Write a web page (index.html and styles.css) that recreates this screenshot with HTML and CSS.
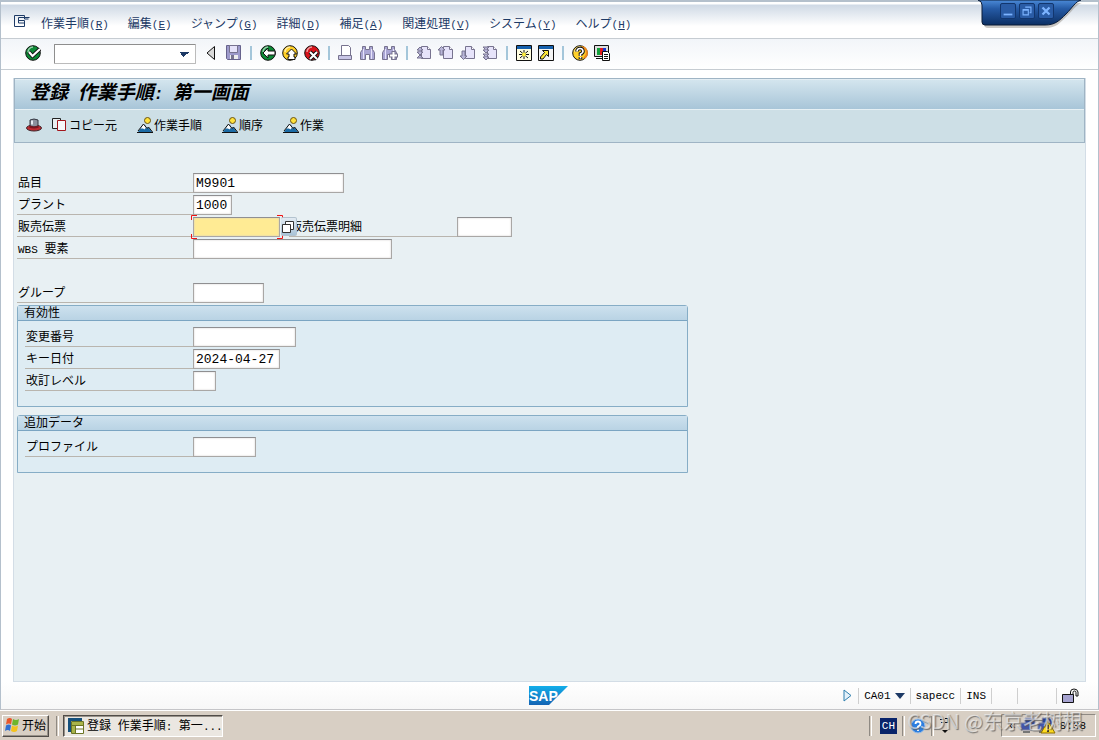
FILE: index.html
```html
<!DOCTYPE html>
<html lang="ja">
<head>
    <meta charset="UTF-8">
    <meta name="viewport" content="width=device-width, initial-scale=1.0">
    <title>登録 作業手順: 第一画面</title>
    <link rel="stylesheet" href="styles.css">
</head>
<body>
    <!-- Shared icon shapes -->
    <svg class="sprite" xmlns="http://www.w3.org/2000/svg">
        <symbol id="ball" viewBox="0 0 16 16">
            <circle cx="8" cy="8" r="7.3" fill="currentColor" stroke="#111" stroke-width="1"/>
            <path d="M3 7a5 5 0 0 1 5-5" fill="none" stroke="#fff" stroke-opacity=".6" stroke-width="1.4"/>
        </symbol>
        <symbol id="mountain" viewBox="0 0 16 16">
            <path d="M1 15 6 8h2l2 3 1-1 4 5z" fill="#1b6ba5"/>
            <path d="M3.500 11.500 6 8h1.500l2.500 4-1.500-1-1 1.500-1.500-1z" fill="#fff"/>
            <path d="M0 15.500h16M1 14l5.500-7L10 11.500l1.500-1.500 4 5" fill="none" stroke="#111"/>
            <circle cx="10.500" cy="3.500" r="3" fill="#ffe23c" stroke="#6b5310"/>
        </symbol>
        <symbol id="page" viewBox="0 0 16 16">
            <path d="M5.500 1.500h6l3 3v9h-9z" fill="#e6e3fa" stroke="#77738f"/>
            <path d="M11.500 1.500v3h3" fill="#fff" stroke="#77738f"/>
        </symbol>
        <symbol id="glasses" viewBox="0 0 16 16">
            <path d="M2.500 1.500h3v3h4v-3h3v3l2 3v7h-5v-5h-4v5h-5v-7l2-3z" fill="#aaa6d4" stroke="#77738f"/>
            <path d="M3.500 4v10M11.500 4v10" stroke="#e6e3fa"/>
        </symbol>
    </svg>

    <div class="app">
        <div class="window-controls">
            <svg class="window-shape" viewBox="0 0 104 30">
                <defs>
                    <linearGradient id="tab" x1="0" y1="0" x2="0" y2="1">
                        <stop offset="0" stop-color="#4b8ad8"/>
                        <stop offset=".35" stop-color="#255aa5"/>
                        <stop offset="1" stop-color="#0c2f63"/>
                    </linearGradient>
                </defs>
                <path d="M3 2q3 1 3 5v17q0 4 4 4h58c10 0 14-5 21-12s10-12 15-13z" fill="#8b857c" opacity=".45"/>
                <path d="M0 0q4 1 4 5v17q0 3 3 3h60c10 0 14-4 21-11S97 2 103 0z" fill="url(#tab)" stroke="#0b1c38"/>
            </svg>
            <button class="win-btn" aria-label="最小化"><svg viewBox="0 0 16 16"><path d="M3 12h10" stroke="#7db4ff" stroke-width="2"/></svg></button>
            <button class="win-btn" aria-label="元に戻す"><svg viewBox="0 0 16 16"><path d="M6 3.500h6.500V10H11M3.500 7h6v5.500h-6zM3 6.500h7" fill="none" stroke="#7db4ff" stroke-width="1.300"/></svg></button>
            <button class="win-btn" aria-label="閉じる"><svg viewBox="0 0 16 16"><path d="m4 4 8 8M12 4l-8 8" stroke="#7db4ff" stroke-width="2.600"/></svg></button>
        </div>

        <nav class="menubar">
            <button class="menu-icon" aria-label="メニュー">
                <svg width="16" height="14" viewBox="0 0 16 14"><path d="M10.500 3.500v-2h-10v11h10V9M15.500 3.500h-11V9h6V6.500h-6M10.500 3.500V5h4" fill="none" stroke="#1d3a66"/></svg>
            </button>
            <a href="#">作業手順<span class="en">(<u>R</u>)</span></a>
            <a href="#">編集<span class="en">(<u>E</u>)</span></a>
            <a href="#">ジャンプ<span class="en">(<u>G</u>)</span></a>
            <a href="#">詳細<span class="en">(<u>D</u>)</span></a>
            <a href="#">補足<span class="en">(<u>A</u>)</span></a>
            <a href="#">関連処理<span class="en">(<u>V</u>)</span></a>
            <a href="#">システム<span class="en">(<u>Y</u>)</span></a>
            <a href="#">ヘルプ<span class="en">(<u>H</u>)</span></a>
        </nav>

        <div class="toolbar">
            <button class="icon-btn" aria-label="Enter">
                <svg class="green" viewBox="0 0 16 16"><use href="#ball"/><path d="m4 7 3.500 4L15 4" fill="none" stroke="#111" stroke-width="4"/><path d="m4 7 3.500 4L15 4" fill="none" stroke="#fff" stroke-width="2.200"/></svg>
            </button>
            <select class="command" aria-label="コマンド"><option></option></select>
            <button class="icon-btn" aria-label="コマンド項目を閉じる">
                <svg viewBox="0 0 16 16"><path d="M10.500 1.500v13L3 8z" fill="#d9d9d9" stroke="#111"/></svg>
            </button>
            <button class="icon-btn" aria-label="保存">
                <svg viewBox="0 0 16 16"><path d="M.500.500h14v14h-13l-1-1z" fill="#9d9acb" stroke="#66628c"/><path d="M3.500.500h8v7h-8z" fill="#e6e3fa" stroke="#77738f"/><path d="M4 10h8v4H4z" fill="#eee"/><path d="M5 10h3v4H5z" fill="#77738f"/></svg>
            </button>
            <span class="sep"></span>
            <button class="icon-btn" aria-label="戻る">
                <svg class="green" viewBox="0 0 16 16"><use href="#ball"/><path d="m3 8 5-5v3h7v4H8v3z" fill="#fff" stroke="#111"/></svg>
            </button>
            <button class="icon-btn" aria-label="終了">
                <svg class="yellow" viewBox="0 0 16 16"><use href="#ball"/><path d="m9.500 4 5 5H12v3h1v2.500H6V12h1V9H4.500z" fill="#fff" stroke="#111"/></svg>
            </button>
            <button class="icon-btn" aria-label="キャンセル">
                <svg class="red" viewBox="0 0 16 16"><use href="#ball"/><path d="m6 7 7 7M13 7l-7 7" stroke="#111" stroke-width="4"/><path d="m6 7 7 7M13 7l-7 7" stroke="#fff" stroke-width="2"/></svg>
            </button>
            <span class="sep"></span>
            <button class="icon-btn" aria-label="印刷" disabled>
                <svg viewBox="0 0 16 16"><path d="M3.500.500h7l2 2v8h-9z" fill="#fff" stroke="#77738f"/><path d="M.500 10.500h13v4H.500z" fill="#c9c6e6" stroke="#77738f"/></svg>
            </button>
            <button class="icon-btn" aria-label="検索" disabled>
                <svg viewBox="0 0 16 16"><use href="#glasses"/></svg>
            </button>
            <button class="icon-btn" aria-label="次を検索" disabled>
                <svg viewBox="0 0 16 16"><use href="#glasses"/><path d="M11.500 6v9M7 10.500h9" stroke="#77738f" stroke-width="4"/><path d="M11.500 7v7M8 10.500h7" stroke="#fff" stroke-width="2"/></svg>
            </button>
            <span class="sep"></span>
            <button class="icon-btn" aria-label="先頭ページ" disabled>
                <svg viewBox="0 0 16 16"><use href="#page"/><path d="m1 5 3-3 3 3H5v2h2l-3 3 3 3H1l3-3-3-3h2V5z" fill="#b8b5d8" stroke="#77738f"/></svg>
            </button>
            <button class="icon-btn" aria-label="前ページ" disabled>
                <svg viewBox="0 0 16 16"><use href="#page"/><path d="m0 5 3.500-3.500L7 5H5v5H2V5z" fill="#b8b5d8" stroke="#77738f"/></svg>
            </button>
            <button class="icon-btn" aria-label="次ページ" disabled>
                <svg viewBox="0 0 16 16"><use href="#page"/><path d="m0 11 3.500 3.500L7 11H5V6H2v5z" fill="#b8b5d8" stroke="#77738f"/></svg>
            </button>
            <button class="icon-btn" aria-label="最終ページ" disabled>
                <svg viewBox="0 0 16 16"><use href="#page"/><path d="M1 2h6L5 4v1h2L4 8 1 5h2V4zM1 9h6l-2 2v1h2l-3 3-3-3h2v-1z" fill="#b8b5d8" stroke="#77738f"/></svg>
            </button>
            <span class="sep"></span>
            <button class="icon-btn" aria-label="新規セッション">
                <svg viewBox="0 0 16 16"><path d="M.500.500h15v15H.500z" fill="#fffde0" stroke="#111"/><path d="M1 1h14v3H1z" fill="#1560ad"/><path d="M8 5v9M3 9.500h10M4 6l8 7M12 6l-8 7" stroke="#111"/><circle cx="8" cy="9.500" r="2" fill="#ffef3e"/></svg>
            </button>
            <button class="icon-btn" aria-label="ショートカット">
                <svg viewBox="0 0 16 16"><path d="M.500.500h15v15H.500z" fill="#f4f4f4" stroke="#111"/><path d="M1 1h14v3H1z" fill="#1560ad"/><path d="M4.500 5.500h6v6L8.500 9.500 5 14H2.500v-2L6.500 7.500z" fill="#ffe93a" stroke="#111"/></svg>
            </button>
            <span class="sep"></span>
            <button class="icon-btn" aria-label="ヘルプ">
                <svg class="yellow" viewBox="0 0 16 16"><use href="#ball"/><path d="M10 2a6 6 0 0 1 2 11" fill="none" stroke="#f08a1c" stroke-width="2"/><path d="M5 6.500q0-3 3-3t3 3Q11 8 8.500 9v2M8.500 12v2" fill="none" stroke="#111" stroke-width="3.600"/><path d="M5 6.500q0-3 3-3t3 3Q11 8 8.500 9v2M8.500 12v1.500" fill="none" stroke="#fff" stroke-width="1.700"/></svg>
            </button>
            <button class="icon-btn" aria-label="レイアウト調整">
                <svg viewBox="0 0 16 16"><path d="M.500.500h14v11H.500zM2 13.500h7" fill="#ddd" stroke="#111"/><path d="M3 3h3v7H3z" fill="#12a03c"/><path d="M6 3h3v7H6z" fill="#e3171c"/><path d="M9 3h3v7H9z" fill="#1635d0"/><path d="M8.500 6.500h5l2 2v7h-7z" fill="#fff" stroke="#111"/><path d="M10 9.500h4M10 11.500h4M10 13.500h4" stroke="#111"/></svg>
            </button>
        </div>

        <main class="content">
            <header class="screen-header">
                <h1>登録<span class="en"> </span>作業手順<span class="en">: </span>第一画面</h1>
                <div class="app-toolbar">
                    <button class="hat" aria-label="見出し">
                        <svg viewBox="0 0 16 16"><ellipse cx="8" cy="11" rx="7.500" ry="3" fill="#bf2b32" stroke="#40262c"/><path d="M4 9V3q4-2 8 0v6q-4 2-8 0z" fill="#8c919e" stroke="#343741"/><path d="M6 3.500v4" stroke="#e8ebf2" stroke-width="2"/><path d="M3.500 9.500q4.500 2 9 0" fill="none" stroke="#7c1620" stroke-width="2"/></svg>
                    </button>
                    <button>
                        <svg viewBox="0 0 16 16"><path d="M.500 1.500h8v10h-8z" fill="#e9eef0" stroke="#222"/><path d="M5.500 3.500h8v10h-8z" fill="#f6f7fa" stroke="#a3161c"/></svg>
                        <span>コピー元</span>
                    </button>
                    <button><svg viewBox="0 0 16 16"><use href="#mountain"/></svg><span>作業手順</span></button>
                    <button><svg viewBox="0 0 16 16"><use href="#mountain"/></svg><span>順序</span></button>
                    <button><svg viewBox="0 0 16 16"><use href="#mountain"/></svg><span>作業</span></button>
                </div>
            </header>

            <form class="form">
                <div class="row">
                    <label for="material">品目</label>
                    <input class="w-material" type="text" id="material" value="M9901">
                </div>
                <div class="row">
                    <label for="plant">プラント</label>
                    <input class="w-plant" type="text" id="plant" value="1000">
                </div>
                <div class="row">
                    <label for="order">販売伝票</label>
                    <div class="field-focus">
                        <input class="w-date" type="text" id="order">
                        <svg class="corners" viewBox="0 0 92 24"><path d="M.500 5V.500H6M86 .500h5.500V5M.500 19v4.500H6M86 23.500h5.500V19" fill="none" stroke="#f01414"/></svg>
                        <button type="button" class="match-btn" aria-label="検索ヘルプ">
                            <svg viewBox="0 0 12 12"><path d="M3.500 3.500v-3h8v8h-3" fill="#fff" stroke="#333"/><path d="M.500 3.500h8v8h-8z" fill="#fff" stroke="#333"/></svg>
                        </button>
                    </div>
                    <label for="item" class="second">販売伝票明細</label>
                    <input class="w-item" type="text" id="item">
                </div>
                <div class="row">
                    <label for="wbs"><span class="en">WBS </span>要素</label>
                    <input class="w-wbs" type="text" id="wbs">
                </div>
                <div class="row spaced">
                    <label for="group">グループ</label>
                    <input class="w-group" type="text" id="group">
                </div>

                <section class="box">
                    <h2>有効性</h2>
                    <div class="box-body">
                        <div class="row">
                            <label for="change">変更番号</label>
                            <input class="w-change" type="text" id="change">
                        </div>
                        <div class="row">
                            <label for="keydate">キー日付</label>
                            <input class="w-date" type="text" id="keydate" value="2024-04-27">
                        </div>
                        <div class="row">
                            <label for="rev">改訂レベル</label>
                            <input class="w-rev" type="text" id="rev">
                        </div>
                    </div>
                </section>

                <section class="box">
                    <h2>追加データ</h2>
                    <div class="box-body">
                        <div class="row">
                            <label for="profile">プロファイル</label>
                            <input class="w-profile" type="text" id="profile">
                        </div>
                    </div>
                </section>
            </form>
        </main>

        <footer class="statusbar">
            <div class="sap-logo">
                <svg width="40" height="20" viewBox="0 0 40 20">
                    <defs>
                        <linearGradient id="sap" x1="0" y1="0" x2="0" y2="1">
                            <stop offset="0" stop-color="#12aeea"/>
                            <stop offset="1" stop-color="#1464b4"/>
                        </linearGradient>
                    </defs>
                    <path d="M0 0h39L20 19H0z" fill="url(#sap)"/>
                    <text class="sap-text" x="0" y="15">SAP</text>
                </svg>
            </div>
            <div class="status-info en">
                <button class="status-arrow" aria-label="詳細表示"><svg width="9" height="13" viewBox="0 0 9 13"><path d="M1 1v11l7-5.500z" fill="#e4f1fa" stroke="#2f7fae"/></svg></button>
                <button class="status-cell">CA01<svg width="10" height="6" viewBox="0 0 10 6"><path d="M0 0h10L5 6z" fill="#1d3a66"/></svg></button>
                <span class="status-cell">sapecc</span>
                <span class="status-cell">INS</span>
                <span class="status-cell empty-s"></span>
                <span class="status-cell empty-l"></span>
                <span class="status-cell lock"><svg width="17" height="16" viewBox="0 0 17 16"><path d="M8.500 7V4q0-3 3.500-3t4 3v4h-2V4.500q0-1.500-1.500-1.500T11 4.500V7" fill="#fff" stroke="#111"/><path d="M.500 6.500h11v8H.500z" fill="#a5a2cf" stroke="#111"/></svg></span>
            </div>
        </footer>
    </div>

    <div class="taskbar">
        <button class="start">
            <svg width="16" height="16" viewBox="0 0 16 16"><path d="M3 2q3-2 5 0L7 7.500q-2-2-5 0z" fill="#e8562a"/><path d="M9 2q3 2 6 0l-1 5.500q-3 2-6 0z" fill="#6fb52c"/><path d="M2 8.500q3-2 5 0L6 14q-2-2-5 0z" fill="#2f6fd0"/><path d="M8 8.500q3 2 6 0L13 14q-3 2-6 0z" fill="#f5c21c"/></svg>
            <span lang="zh">开始</span>
        </button>
        <span class="grip"></span>
        <button class="task">
            <svg width="16" height="16" viewBox="0 0 16 16"><path d="M0 0h14v3H3v11H0z" fill="#15507c"/><path d="M3.500 3.500h12v12h-12z" fill="#fff" stroke="#6b7424"/><path d="M4 4h11v3H4zM4 7h3v8H4z" fill="#a9b44a"/><path d="M7.500 7v8M4 7.500h11M8 11h7" stroke="#6b7424"/></svg>
            <span>登録<span class="en"> </span>作業手順<span class="en">: </span>第一<span class="en">...</span></span>
        </button>

        <div class="tray">
            <span class="grip"></span>
            <span class="lang en">CH</span>
            <span class="grip"></span>
            <svg width="16" height="16" viewBox="0 0 16 16"><circle cx="8" cy="8" r="7" fill="#2c7fe0" stroke="#9dbfe6"/><path d="M5.500 6q0-2.500 2.500-2.500T10.500 6Q10.500 7.500 8 8.500V10M8 11.500v1.500" fill="none" stroke="#fff" stroke-width="1.800"/></svg>
            <span class="grip"></span>
            <svg class="options" width="9" height="18" viewBox="0 0 9 18"><path d="M0 2.500h4M5 1.500h3v4H5M1 5.500h3" fill="none" stroke="#111"/><path d="M2 13h6l-3 3z" fill="#111"/></svg>
            <div class="notify">
                <span class="en">«</span>
                <svg width="36" height="17" viewBox="0 0 36 17"><path d="M5 1h10v7H5zM22 1h10v7H22z" fill="#2b3f92" stroke="#9a9fb8"/><path d="M1 6h10v7H1zM18 6h10v7H18z" fill="#4355a8" stroke="#8589a5"/><path d="M3 15h7M19 15h6" stroke="#777" stroke-width="2"/><path d="m28 4 7 12H21z" fill="#ffdc1e" stroke="#8f7000"/><path d="M28 8v4M28 13v2" stroke="#111" stroke-width="1.600"/></svg>
                <time class="en">8:38</time>
            </div>
            <span class="watermark" lang="zh">CSDN @东京老树根</span>
        </div>
    </div>
</body>
</html>
```
FILE: styles.css
```css
* {
    margin: 0;
    padding: 0;
    box-sizing: border-box;
}

body {
    display: flex;
    flex-direction: column;
    min-height: 100vh;
    background-color: #d8cfc4;
    color: #000;
    font-family: 'Noto Sans CJK JP', sans-serif;
    font-size: 12px;
    line-height: 16px;
}

button,
select,
input {
    font: inherit;
    color: inherit;
    border: none;
    background: none;
}

a {
    color: inherit;
    text-decoration: none;
}

svg {
    display: block;
    flex: none;
}

[lang="zh"] {
    font-family: 'Noto Sans CJK SC', sans-serif;
}

.sprite {
    position: absolute;
    width: 0;
    height: 0;
}

.en {
    font-family: 'Liberation Mono', monospace;
    font-size: 11px;
    white-space: pre;
}

/* Main window */
.app {
    position: relative;
    flex: 1;
    display: flex;
    flex-direction: column;
    background-color: #fff;
    border: 1px solid #b4c0cc;
    border-top-width: 2px;
    border-bottom-color: #c5c5c8;
}

.window-controls {
    position: absolute;
    top: -2px;
    right: 16px;
    width: 104px;
    height: 30px;
    display: flex;
    gap: 3px;
    padding: 3px 0 0 22px;
}

.window-shape {
    position: absolute;
    top: 0;
    left: 0;
    width: 104px;
    height: 30px;
}

.win-btn {
    position: relative;
    width: 16px;
    height: 16px;
    border: 1px solid #12366e;
    border-radius: 2px;
    background-color: #2a5ca6;
}

.menubar {
    display: flex;
    align-items: center;
    gap: 19px;
    height: 37px;
    padding: 8px 13px 0;
    color: #1d3a66;
    background: linear-gradient(#fff 0, #fff 2px, #cfd9e5 3px, #fff 24px);
    border-bottom: 1px solid #c6ccd2;
}

.menubar a {
    white-space: nowrap;
}

.menu-icon {
    width: 16px;
    margin: -6px -8px 0 0;
}

.toolbar {
    display: flex;
    align-items: center;
    gap: 6px;
    height: 31px;
    padding: 0 24px 2px;
    background: linear-gradient(#f2f5f9, #fff);
    border-bottom: 1px solid #c6ccd2;
}

.icon-btn,
.icon-btn svg {
    width: 16px;
    height: 16px;
}

.green {
    color: #0c8a36;
}

.yellow {
    color: #ffd028;
}

.red {
    color: #d8141c;
}

.command {
    appearance: none;
    width: 142px;
    height: 20px;
    margin: 2px 2px 0 7px;
    border: 1px solid #8e8e8e;
    border-right-color: #bbb;
    border-bottom-color: #bbb;
    border-radius: 1px;
    background: conic-gradient(from -45deg at 50% 100%, #1d3a66 90deg, transparent 0) no-repeat right 6px center / 10px 5px, #fff;
}

.sep {
    width: 6px;
    height: 14px;
    background: linear-gradient(#a4c6da, #a4c6da) no-repeat center / 2px 100%;
}

/* Screen area */
.content {
    flex: 1;
    margin: 8px 12px 0;
    background-color: #e8f0f3;
    border: 1px solid #d3dde6;
    border-top: none;
}

.screen-header {
    border: 1px solid #9fb4c4;
}

h1 {
    height: 31px;
    padding-left: 15px;
    font-size: 19px;
    line-height: 22px;
    font-weight: bold;
    font-style: italic;
    background: linear-gradient(#d3e5ee, #a8c5d8);
    border-top: 1px solid #e4eef4;
    border-bottom: 1px solid #e6f0f4;
}

h1 .en {
    font-size: 16px;
}

.app-toolbar {
    display: flex;
    align-items: center;
    gap: 20px;
    height: 32px;
    padding: 0 11px 3px;
    background-color: #cddfe6;
}

.app-toolbar button {
    display: flex;
    align-items: center;
    gap: 1px;
    white-space: nowrap;
}

.app-toolbar .hat {
    margin-right: -10px;
}

.app-toolbar svg {
    width: 16px;
    height: 16px;
}

.form {
    display: flex;
    flex-direction: column;
    gap: 2px;
    padding: 30px 3px;
}

.row {
    display: flex;
    height: 20px;
}

.row.spaced {
    margin-top: 22px;
}

.row label {
    width: 176px;
    padding-left: 1px;
    line-height: 18px;
    white-space: nowrap;
    border-bottom: 1px solid #b9b5ae;
}

.row label.second {
    width: 168px;
    margin-left: 9px;
}

.row input {
    height: 20px;
    padding: 0 2px;
    font-family: 'Liberation Mono', monospace;
    font-size: 13px;
    background-color: #fff;
    border: 1px solid #a9a7a5;
    border-top-color: #8f8f91;
    box-shadow: inset 0 0 2px #cfcac8;
}

.w-material {
    width: 151px;
}

.w-plant {
    width: 39px;
}

.w-date {
    width: 87px;
}

.w-item {
    width: 55px;
}

.w-wbs {
    width: 199px;
}

.w-group {
    width: 71px;
}

.w-change {
    width: 103px;
}

.w-rev {
    width: 23px;
}

.w-profile {
    width: 63px;
}

.field-focus {
    position: relative;
}

.row .field-focus input {
    background-color: #ffeb94;
}

.corners {
    position: absolute;
    top: -2px;
    left: -2px;
    width: 92px;
    height: 24px;
    pointer-events: none;
}

.match-btn {
    position: absolute;
    top: 0;
    left: 88px;
    display: flex;
    align-items: center;
    width: 16px;
    height: 19px;
    background: linear-gradient(#e2ebf2, #a9c3d8);
    border: 1px solid #b3c3cf;
    border-left: none;
    border-radius: 2px;
}

.match-btn svg {
    width: 12px;
    height: 12px;
    margin-left: 1px;
}

.box {
    max-width: 671px;
    background-color: #deecf3;
    border: 1px solid #86adc6;
    border-radius: 3px 3px 0 0;
}

.box + .box {
    margin-top: 6px;
}

.box h2 {
    height: 15px;
    padding-left: 6px;
    font-size: 12px;
    line-height: 12px;
    font-weight: normal;
    background: linear-gradient(#cde1ee, #b9d3e4);
    border-bottom: 1px solid #7ba5c2;
}

.box-body {
    display: flex;
    flex-direction: column;
    gap: 2px;
    padding: 6px 7px 15px;
}

.box .row label {
    width: 168px;
}

/* Status bar */
.statusbar {
    display: flex;
    align-items: center;
    height: 27px;
    padding: 0 19px 0 12px;
    background: linear-gradient(#fff, #f7f7f7);
}

.sap-logo {
    flex: 1;
    display: flex;
    justify-content: flex-end;
    margin-right: 274px;
}

.sap-text {
    font-family: 'Liberation Sans', sans-serif;
    font-size: 14px;
    font-weight: bold;
    fill: #fff;
}

.status-info {
    display: flex;
    align-items: center;
}

.status-arrow {
    margin-right: 6px;
}

.status-cell {
    display: flex;
    align-items: center;
    gap: 4px;
    height: 16px;
    padding: 0 5px;
    border-left: 1px solid #cfcfcf;
}

.empty-s {
    width: 26px;
}

.empty-l {
    width: 39px;
}

.lock {
    padding-right: 0;
}

/* Taskbar */
.taskbar {
    display: flex;
    align-items: center;
    height: 30px;
    padding: 0 3px 0 2px;
    border-top: 1px solid #fff;
}

.start,
.task {
    display: flex;
    align-items: center;
    gap: 2px;
    height: 22px;
    padding: 0 2px 2px 1px;
    white-space: nowrap;
    border: 1px solid;
    border-color: #fff #504c48 #504c48 #fff;
    box-shadow: inset -1px -1px #98928a;
}

.grip {
    width: 3px;
    height: 20px;
    border-left: 1px solid #8f8a83;
    border-right: 1px solid #fff;
}

.start + .grip {
    margin: 0 4px 0 7px;
}

.task {
    gap: 3px;
    width: 160px;
    padding: 0 2px 0 4px;
    background-color: #ebe7e1;
    border-color: #504c48 #fff #fff #504c48;
    box-shadow: inset 1px 1px #98928a;
}

.tray {
    position: relative;
    display: flex;
    align-items: center;
    gap: 5px;
    margin-left: auto;
}

.lang {
    height: 16px;
    margin-left: 3px;
    padding: 0 2px;
    line-height: 16px;
    color: #fff;
    background-color: #0a246a;
}

.options {
    margin: 0 47px 0 1px;
}

.notify {
    display: flex;
    align-items: center;
    gap: 4px;
    height: 23px;
    padding: 0 9px 0 7px;
    border: 1px solid;
    border-color: #8f8a83 #fff #fff #8f8a83;
}

.watermark {
    position: absolute;
    right: 13px;
    top: -5px;
    font-size: 20px;
    line-height: 24px;
    white-space: nowrap;
    color: rgba(245, 245, 245, 0.6);
    text-shadow: 1px 1px 1px rgba(90, 90, 90, 0.8);
}
```
